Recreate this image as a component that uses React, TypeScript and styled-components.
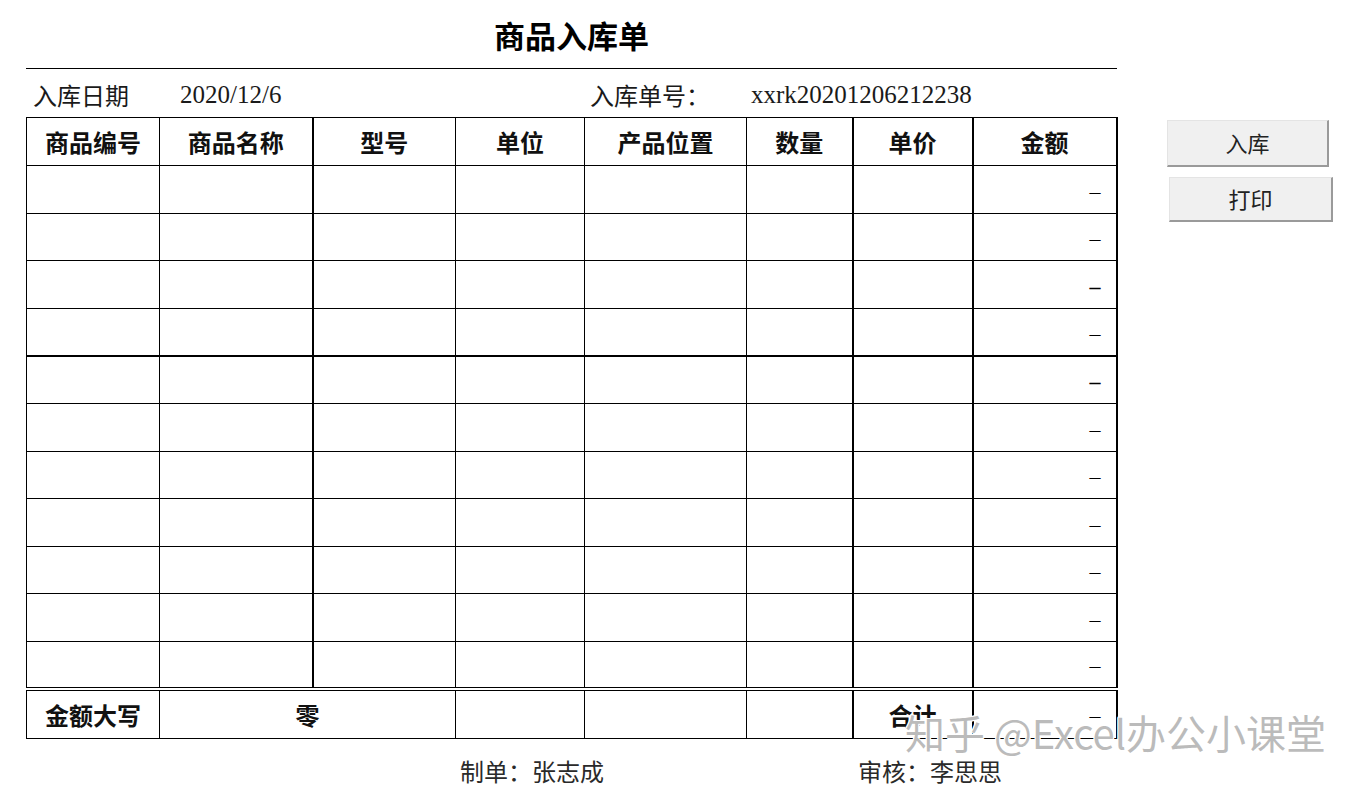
import React from "react";
import styled, { createGlobalStyle } from "styled-components";

const GlobalStyle = createGlobalStyle`
  html, body { margin: 0; padding: 0; background: #fff; }
  body {
    font-family: "Liberation Serif", "Noto Sans CJK SC", serif;
    color: #000;
  }
`;

const CJK = `"Noto Sans CJK SC", "Noto Sans", sans-serif`;
const SERIF = `"Liberation Serif", "Noto Sans CJK SC", serif`;

const Page = styled.div`
  position: relative;
  width: 1361px;
  height: 790px;
  overflow: hidden;
  box-sizing: border-box;
  padding-left: 26px;
  display: flex;
  align-items: flex-start;
`;

const Sheet = styled.div`
  width: 1091px;
  display: flex;
  flex-direction: column;
`;

const Title = styled.h1`
  margin: 0;
  height: 69px;
  box-sizing: border-box;
  padding-top: 0;
  border-bottom: 1px solid #000;
  display: flex;
  align-items: center;
  justify-content: center;
  font-family: ${CJK};
  font-weight: 700;
  font-size: 31px;
  color: #000;
`;

const InfoRow = styled.div`
  height: 48px;
  box-sizing: border-box;
  padding: 3px 0 0 7px;
  display: grid;
  grid-template-columns: 147px 410px 161px auto;
  align-items: center;
`;

const InfoLabel = styled.span`
  font-family: ${CJK};
  font-size: 24px;
  color: #1a1a1a;
  white-space: nowrap;
`;

const InfoValue = styled.span`
  font-family: ${SERIF};
  font-size: 25px;
  color: #1a1a1a;
  white-space: nowrap;
`;

const Grid = styled.table`
  border-collapse: collapse;
  table-layout: fixed;
  width: 1091px;
  font-family: ${CJK};
`;

const Row = styled.tr<{ $h: number }>`
  height: ${(p) => p.$h}px;
`;

type CellProps = {
  $thickLeft?: boolean;
  $thickRight?: boolean;
  $thickTop?: boolean;
  $double?: boolean;
};

const cellBorders = (p: CellProps) => `
  border: 1px solid #000;
  ${p.$thickLeft ? "border-left-width: 2px;" : ""}
  ${p.$thickRight ? "border-right-width: 2px;" : ""}
  ${p.$thickTop ? "border-top-width: 2px;" : ""}
  ${p.$double ? "border-top: 4px double #000;" : ""}
`;

const HeadCell = styled.th<CellProps>`
  ${(p) => cellBorders(p)}
  padding: 0;
  text-align: center;
  vertical-align: middle;
  font-family: ${CJK};
  font-weight: 700;
  font-size: 24px;
  color: #111;
`;

const Cell = styled.td<CellProps>`
  ${(p) => cellBorders(p)}
  padding: 0;
  text-align: center;
  vertical-align: middle;
`;

const AmountCell = styled.td<CellProps & { $heavy?: boolean }>`
  ${(p) => cellBorders(p)}
  padding: 4px 15px 0 0;
  text-align: right;
  vertical-align: middle;
  font-family: ${SERIF};
  font-size: 22px;
  font-weight: ${(p) => (p.$heavy ? 700 : 400)};
  color: #000;
`;

const SumCell = styled.td<CellProps>`
  ${(p) => cellBorders(p)}
  padding: 0;
  text-align: center;
  vertical-align: middle;
  font-family: ${CJK};
  font-weight: 700;
  font-size: 24px;
  color: #111;
`;

const Footer = styled.div`
  height: 51px;
  box-sizing: border-box;
  padding: 12px 0 0 434px;
  display: grid;
  grid-template-columns: 398px auto;
  align-items: center;
`;

const Sign = styled.span`
  font-family: ${CJK};
  font-size: 24px;
  line-height: 30px;
  color: #2a2a2a;
  white-space: nowrap;
`;

const ButtonColumn = styled.div`
  margin-left: 50px;
  padding-top: 120px;
  display: flex;
  flex-direction: column;
  gap: 10px;
`;

const SheetButton = styled.button<{ $w: number; $h: number; $shift: number }>`
  width: ${(p) => p.$w}px;
  height: ${(p) => p.$h}px;
  margin-left: ${(p) => p.$shift}px;
  box-sizing: border-box;
  background: #f0f0f0;
  border-top: 1px solid #e4e4e4;
  border-left: 1px solid #e4e4e4;
  border-right: 2px solid #9a9a9a;
  border-bottom: 2px solid #9a9a9a;
  font-family: ${CJK};
  font-size: 22px;
  color: #222;
  padding: 0 0 2px;
  cursor: pointer;
`;

const Watermark = styled.div`
  position: absolute;
  left: 905px;
  top: 708px;
  font-family: ${CJK};
  font-size: 40px;
  line-height: 48px;
  color: rgba(175, 175, 175, 0.85);
  white-space: nowrap;
  pointer-events: none;
  text-shadow: 1px 0 0 #fff, -1px 0 0 #fff, 0 1px 0 #fff, 0 -1px 0 #fff,
    1px 1px 0 #fff, -1px -1px 0 #fff;
`;

const columns = [
  { title: "商品编号", width: 133, thickLeft: false },
  { title: "商品名称", width: 153, thickLeft: false },
  { title: "型号", width: 143, thickLeft: true },
  { title: "单位", width: 129, thickLeft: false },
  { title: "产品位置", width: 162, thickLeft: false },
  { title: "数量", width: 106, thickLeft: false },
  { title: "单价", width: 120, thickLeft: true },
  { title: "金额", width: 144, thickLeft: true },
];

const rowHeights = [48, 47, 48, 47, 48, 48, 47, 48, 47, 48, 47];
const heavyDash = [false, false, true, false, true, false, false, false, false, false, false];

export default function App() {
  const last = columns.length - 1;
  return (
    <>
      <GlobalStyle />
      <Page>
        <Sheet>
          <Title>商品入库单</Title>
          <InfoRow>
            <InfoLabel>入库日期</InfoLabel>
            <InfoValue>2020/12/6</InfoValue>
            <InfoLabel>入库单号：</InfoLabel>
            <InfoValue>xxrk20201206212238</InfoValue>
          </InfoRow>
          <Grid>
            <colgroup>
              {columns.map((c) => (
                <col key={c.title} style={{ width: c.width }} />
              ))}
            </colgroup>
            <thead>
              <Row $h={48}>
                {columns.map((c, i) => (
                  <HeadCell key={c.title} $thickLeft={c.thickLeft} $thickRight={i === last}>
                    {c.title}
                  </HeadCell>
                ))}
              </Row>
            </thead>
            <tbody>
              {rowHeights.map((h, r) => (
                <Row key={r} $h={h}>
                  {columns.slice(0, last).map((c) => (
                    <Cell key={c.title} $thickLeft={c.thickLeft} $thickTop={r === 4} />
                  ))}
                  <AmountCell $thickLeft $thickRight $thickTop={r === 4} $heavy={heavyDash[r]}>
                    –
                  </AmountCell>
                </Row>
              ))}
              <Row $h={50}>
                <SumCell $double>金额大写</SumCell>
                <SumCell $double colSpan={2}>
                  零
                </SumCell>
                <SumCell $double />
                <SumCell $double />
                <SumCell $double />
                <SumCell $double $thickLeft>
                  合计
                </SumCell>
                <AmountCell $double $thickLeft $thickRight>
                  –
                </AmountCell>
              </Row>
            </tbody>
          </Grid>
          <Footer>
            <Sign>制单：张志成</Sign>
            <Sign>审核：李思思</Sign>
          </Footer>
        </Sheet>
        <ButtonColumn>
          <SheetButton $w={162} $h={47} $shift={0}>
            入库
          </SheetButton>
          <SheetButton $w={164} $h={45} $shift={2}>
            打印
          </SheetButton>
        </ButtonColumn>
        <Watermark>知乎 @Excel办公小课堂</Watermark>
      </Page>
    </>
  );
}
